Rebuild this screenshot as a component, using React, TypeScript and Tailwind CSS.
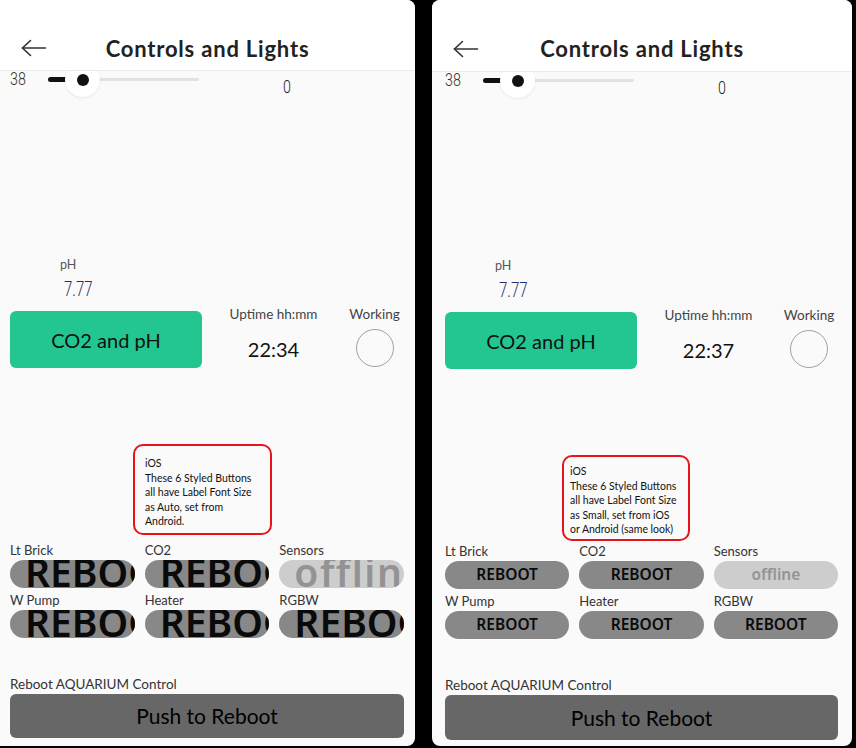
import React from "react";

type NoteProps = {
  lines: string[];
  boxClass: string;
};

type PhoneProps = {
  shellClass: string;
  headerClass: string;
  padClass: string;
  uptime: string;
  note: NoteProps;
  afterNoteClass: string;
  bigLabels: boolean;
  pushClass: string;
};

const tiles = [
  { label: "Lt Brick", text: "REBOOT", off: false },
  { label: "CO2", text: "REBOOT", off: false },
  { label: "Sensors", text: "offline", off: true },
  { label: "W Pump", text: "REBOOT", off: false },
  { label: "Heater", text: "REBOOT", off: false },
  { label: "RGBW", text: "REBOOT", off: false },
];

function BackArrow() {
  return (
    <svg width="26" height="18" viewBox="0 0 26 18" fill="none" stroke="#333" strokeWidth="1.6" strokeLinecap="round">
      <path d="M1.5 9h23" />
      <path d="M9.5 1.5L1.5 9l8 7.5" />
    </svg>
  );
}

function Slider() {
  return (
    <div className="relative w-[151px] h-[16px]">
      <div className="absolute left-0 right-0 top-[7px] h-[3px] rounded-full bg-[#e2e2e2]" />
      <div className="absolute left-0 w-[24px] top-[6px] h-[5px] rounded-full bg-[#111]" />
      <div className="absolute left-[17px] top-[-9px] w-[35px] h-[35px] rounded-full bg-white shadow-[0_1px_3px_rgba(0,0,0,0.08)] flex items-center justify-center">
        <div className="w-[12px] h-[12px] rounded-full bg-[#111]" />
      </div>
    </div>
  );
}

function Phone({ shellClass, headerClass, padClass, uptime, note, afterNoteClass, bigLabels, pushClass }: PhoneProps) {
  return (
    <div className={`flex flex-col overflow-hidden bg-[#fafafa] font-['Lato','Noto_Sans',sans-serif] ${shellClass}`}>
      <div className={`grid grid-cols-[60px_1fr_60px] items-center bg-white border-b border-[#ebebeb] pt-[26px] ${headerClass}`}>
        <div className="pl-[21px] flex">
          <BackArrow />
        </div>
        <div className="text-center text-[22px] font-bold text-[#222] tracking-[0.8px] whitespace-nowrap">
          Controls and Lights
        </div>
        <div />
      </div>

      <div className={`flex-1 flex flex-col overflow-hidden ${padClass}`}>
        <div className="flex h-[30px] shrink-0">
          <div className="w-[38px] mt-[-2px] text-[19px] leading-[19px] text-[#333] font-['Roboto',sans-serif] font-light">
            <span className="inline-block origin-left scale-x-75">38</span>
          </div>
          <Slider />
          <div className="ml-[84px] mt-[6px] text-[19px] leading-[19px] text-[#222] font-['Roboto',sans-serif] font-light">
            <span className="inline-block origin-left scale-x-75">0</span>
          </div>
        </div>

        <div className="mt-[156px] pl-[50px] text-[12.5px] leading-[16px] text-[#555]">pH</div>
        <div className="mt-[6px] pl-[54px] text-[20px] leading-[20px] text-[#2d2d5f] font-['Roboto',sans-serif] font-light">
          <span className="inline-block origin-left scale-x-75">7.77</span>
        </div>

        <div className="mt-[7px] flex items-start">
          <div className="mt-[5px] w-[192px] h-[57px] shrink-0 rounded-[6px] bg-[#23c690] flex items-center justify-center text-[20px] text-[#111]">
            CO2 and pH
          </div>
          <div className="w-[143px] shrink-0 flex flex-col items-center">
            <div className="text-[13.5px] leading-[16px] text-[#444]">Uptime hh:mm</div>
            <div className="mt-[15px] text-[20px] leading-[24px] text-[#111]">{uptime}</div>
          </div>
          <div className="flex-1 flex flex-col items-center">
            <div className="text-[13.5px] leading-[16px] text-[#444]">Working</div>
            <div className="mt-[7px] w-[38px] h-[38px] rounded-full border border-[#a0a0a0]" />
          </div>
        </div>

        <div className={`shrink-0 border-2 border-[#e8141c] rounded-[10px] text-[10.5px] leading-[14.5px] text-[#111] ${note.boxClass}`}>
          {note.lines.map((l) => (
            <div key={l} className="whitespace-nowrap">
              {l}
            </div>
          ))}
        </div>

        <div className={`grid grid-cols-3 gap-x-[10px] gap-y-[4px] ${afterNoteClass}`}>
          {tiles.map((t) => (
            <div key={t.label} className="flex flex-col">
              <div className="text-[13px] leading-[16px] text-[#333]">{t.label}</div>
              <div
                className={`mt-[2px] h-[28px] rounded-full overflow-hidden flex items-center whitespace-nowrap font-['Noto_Sans',sans-serif] ${
                  t.off ? "bg-[#cdcdcd]" : "bg-[#888888]"
                } ${
                  bigLabels
                    ? "justify-start pl-[15px] pb-[5px] text-[39px] font-semibold leading-none"
                    : "justify-center text-[15.5px] font-semibold"
                } ${bigLabels && t.off ? "tracking-[1.5px]" : ""} ${t.off ? "text-[#939393]" : "text-[#0a0a0a]"}`}
              >
                {t.text}
              </div>
            </div>
          ))}
        </div>

        <div className="mt-[38px] text-[13.5px] leading-[16px] text-[#333]">Reboot AQUARIUM Control</div>
        <div className={`mt-[2px] rounded-[6px] bg-[#676767] flex items-center justify-center text-[21px] text-black ${pushClass}`}>
          Push to Reboot
        </div>
      </div>
    </div>
  );
}

export default function App() {
  return (
    <div className="w-[856px] h-[748px] bg-black flex items-start overflow-hidden">
      <Phone
        shellClass="w-[415px] h-[746px] rounded-r-[8px]"
        headerClass="h-[71px]"
        padClass="pl-[10px] pr-[11px]"
        uptime="22:34"
        note={{
          lines: ["iOS", "These 6 Styled Buttons", "all have Label Font Size", "as Auto, set from", "Android."],
          boxClass: "mt-[76px] ml-[123px] w-[139px] h-[91px] pt-[10px] pl-[10px]",
        }}
        afterNoteClass="mt-[7px]"
        bigLabels
        pushClass="h-[44px]"
      />
      <div className="w-[17px] shrink-0" />
      <Phone
        shellClass="w-[420px] h-[746px] rounded-[8px]"
        headerClass="h-[72px]"
        padClass="pl-[13px] pr-[14px]"
        uptime="22:37"
        note={{
          lines: [
            "iOS",
            "These 6 Styled Buttons",
            "all have Label Font Size",
            "as Small, set from iOS",
            "or Android (same look)",
          ],
          boxClass: "mt-[86px] ml-[117px] w-[128px] h-[86px] pt-[7px] pl-[6px]",
        }}
        afterNoteClass="mt-[2px]"
        bigLabels={false}
        pushClass="h-[45px]"
      />
    </div>
  );
}
